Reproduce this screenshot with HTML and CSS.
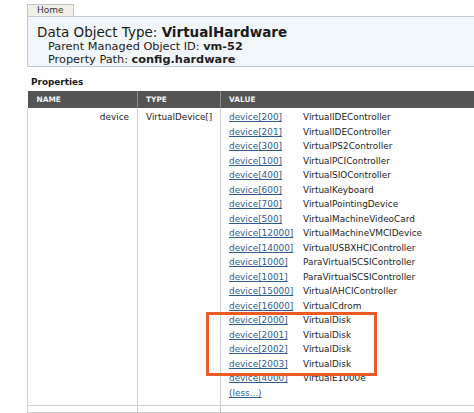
FILE: index.html
```html
<!DOCTYPE html>
<html>
<head>
<meta charset="utf-8">
<link rel="stylesheet" href="styles.css">
</head>
<body>
<div class="page">
  <div class="tabs"><div class="tab">Home</div></div>
  <div class="head">
    <div class="title">Data Object Type: <b>VirtualHardware</b></div>
    <div class="sub">Parent Managed Object ID: <b>vm-52</b></div>
    <div class="sub">Property Path: <b>config.hardware</b></div>
  </div>
  <div class="section">Properties</div>
  <table class="props">
    <colgroup><col class="w-name"><col class="w-type"><col class="w-val"></colgroup>
    <thead>
      <tr><th>NAME</th><th>TYPE</th><th>VALUE</th></tr>
    </thead>
    <tbody>
      <tr>
        <td class="c-name">device</td>
        <td class="c-type">VirtualDevice[]</td>
        <td class="c-val">
          <div class="vlist">
            <a href="#">device[200]</a><span>VirtualIDEController</span>
            <a href="#">device[201]</a><span>VirtualIDEController</span>
            <a href="#">device[300]</a><span>VirtualPS2Controller</span>
            <a href="#">device[100]</a><span>VirtualPCIController</span>
            <a href="#">device[400]</a><span>VirtualSIOController</span>
            <a href="#">device[600]</a><span>VirtualKeyboard</span>
            <a href="#">device[700]</a><span>VirtualPointingDevice</span>
            <a href="#">device[500]</a><span>VirtualMachineVideoCard</span>
            <a href="#">device[12000]</a><span>VirtualMachineVMCIDevice</span>
            <a href="#">device[14000]</a><span>VirtualUSBXHCIController</span>
            <a href="#">device[1000]</a><span>ParaVirtualSCSIController</span>
            <a href="#">device[1001]</a><span>ParaVirtualSCSIController</span>
            <a href="#">device[15000]</a><span>VirtualAHCIController</span>
            <a href="#">device[16000]</a><span>VirtualCdrom</span>
            <a href="#">device[2000]</a><span>VirtualDisk</span>
            <a href="#">device[2001]</a><span>VirtualDisk</span>
            <a href="#">device[2002]</a><span>VirtualDisk</span>
            <a href="#">device[2003]</a><span>VirtualDisk</span>
            <a href="#">device[4000]</a><span>VirtualE1000e</span>
            <a href="#">(less...)</a><span></span>
          </div>
        </td>
      </tr>
      <tr class="next"><td></td><td></td><td></td></tr>
    </tbody>
  </table>
  <div class="highlight"></div>
</div>
</body>
</html>
```
FILE: styles.css
```css
html, body {
  margin: 0;
  padding: 0;
  overflow: hidden;
  background: #ffffff;
}
body {
  font-family: "DejaVu Sans", Verdana, sans-serif;
  color: #222222;
}
.page {
  position: relative;
  padding: 4px 0 0 27px;
  height: 409px;
  overflow: hidden;
}
.tabs {
  display: flex;
}
.tab {
  font-size: 9px;
  line-height: 11px;
  height: 11px;
  padding: 0 9px;
  border: 1px solid #c3c3c3;
  border-bottom: none;
  background: #f2eee8;
  color: #333333;
}
.head {
  border: 1px solid #c4c9ce;
  border-right: none;
  background: #f1f6fb;
  padding: 7.5px 0 0 9px;
}
.title {
  font-size: 13.5px;
  line-height: 15.2px;
  color: #1a1a1a;
}
.sub {
  font-size: 11.3px;
  line-height: 13.3px;
  padding-left: 11px;
  color: #222222;
}
.section {
  margin-top: 9px;
  padding-left: 4px;
  font-size: 8.9px;
  font-weight: bold;
  line-height: 12px;
  color: #1a1a1a;
}
.props {
  margin-top: 3px;
  border-collapse: collapse;
  table-layout: fixed;
  width: 447px;
  font-size: 8.9px;
}
.w-name { width: 110px; }
.w-type { width: 83px; }
.w-val { width: 254px; }
.props th {
  background: #545454;
  color: #f2f2f2;
  font-size: 7.4px;
  font-weight: bold;
  text-align: left;
  height: 17px;
  padding: 0 8px 0 9px;
  border-right: 1px solid #8c8c8c;
}
.props th + th {
  padding-left: 8px;
}
.props th:last-child {
  border-right: none;
}
.props td {
  vertical-align: top;
  padding: 2px 8px 5px 8px;
  line-height: 14.5px;
  border: 1px solid #cfcfcf;
  border-top: none;
  color: #222222;
}
.props td:last-child {
  border-right: none;
}
.props td.c-name {
  text-align: right;
}
.next td {
  height: 6px;
  padding: 0;
}
.vlist {
  display: grid;
  grid-template-columns: 74px auto;
}
.vlist a {
  color: #2d5b8e;
  text-decoration: underline;
}
.highlight {
  position: absolute;
  left: 206px;
  top: 312px;
  width: 171px;
  height: 64px;
  box-sizing: border-box;
  border: 3px solid #ee5a24;
}
```
